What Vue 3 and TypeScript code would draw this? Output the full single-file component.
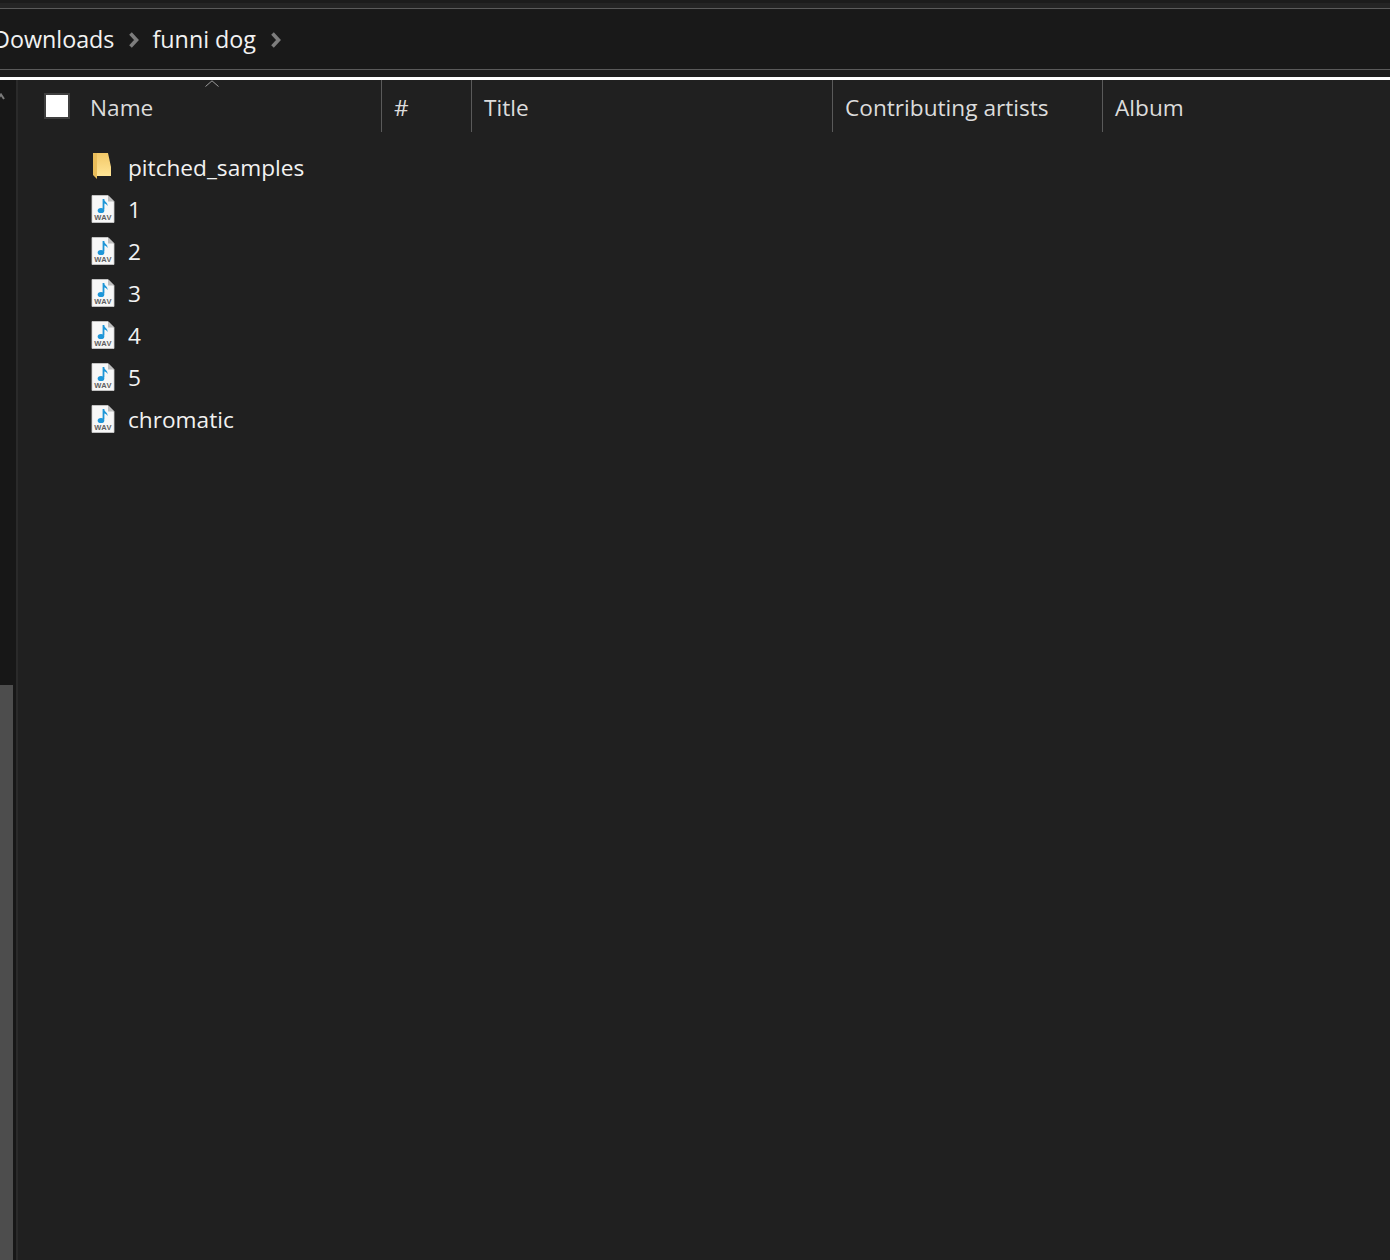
<script setup lang="ts">
interface Col { label: string; width: number }
const cols: Col[] = [
  { label: '#', width: 90 },
  { label: 'Title', width: 361 },
  { label: 'Contributing artists', width: 270 },
  { label: 'Album', width: 288 },
]
const files: string[] = ['1', '2', '3', '4', '5', 'chromatic']
</script>

<template>
  <div class="window">
    <div class="topstrip"></div>
    <div class="crumbs">
      <span class="crumb first">Downloads</span>
      <svg class="chev" viewBox="0 0 12 16" width="12" height="16"><path d="M2.5 1.5 L8.5 8 L2.5 14.5" fill="none" stroke="#7d7d7d" stroke-width="3.6" /></svg>
      <span class="crumb">funni dog</span>
      <svg class="chev" viewBox="0 0 12 16" width="12" height="16"><path d="M2.5 1.5 L8.5 8 L2.5 14.5" fill="none" stroke="#7d7d7d" stroke-width="3.6" /></svg>
    </div>
    <div class="gap"></div>
    <div class="whiteline"></div>
    <div class="body">
      <aside class="side">
        <svg class="up" viewBox="0 0 6 8" width="6" height="8"><path d="M-2 6 L1 1.5 L4 6" fill="none" stroke="#7a7a7a" stroke-width="2" /></svg>
        <div class="thumb"></div>
      </aside>
      <main class="main">
        <div class="head">
          <div class="namecol">
            <span class="check"></span>
            <span class="hlabel">Name</span>
            <svg class="sort" viewBox="0 0 14 7" width="14" height="7"><path d="M0.5 6.5 L7 0.8 L13.5 6.5" fill="none" stroke="#9c9c9c" stroke-width="1" /></svg>
          </div>
          <div v-for="c in cols" :key="c.label" class="col" :style="{ width: c.width + 'px' }">
            <span class="hlabel">{{ c.label }}</span>
          </div>
        </div>
        <div class="list">
          <div class="row">
            <svg class="icon" viewBox="0 0 24 28" width="24" height="28">
              <defs>
                <linearGradient id="fold" x1="0" y1="0" x2="0" y2="1">
                  <stop offset="0" stop-color="#f3c867" />
                  <stop offset="1" stop-color="#ffe596" />
                </linearGradient>
              </defs>
              <path d="M6 0 H17 L20 14 V23 H6 Z" fill="url(#fold)" />
              <path d="M2 0 H6 V26 L2 22 Z" fill="#e9bd5a" />
            </svg>
            <span class="fname">pitched_samples</span>
          </div>
          <div v-for="f in files" :key="f" class="row">
            <svg class="icon" viewBox="0 0 24 28" width="24" height="28">
              <path d="M1 0.5 H17 L23 6.5 V27.5 H1 Z" fill="#f7f7f7" stroke="#cfcfcf" stroke-width="0.8" />
              <path d="M17 0.5 V6.5 H23 Z" fill="#bdbdbd" />
              <path d="M12.5 4 V14.5" stroke="#1e96d8" stroke-width="1.8" fill="none" />
              <ellipse cx="10" cy="15.5" rx="3.3" ry="2.6" fill="#1e96d8" />
              <path d="M12.5 4 C13.5 7 17 7.5 16.5 11 C15.5 9 14 8.5 12.5 8.5 Z" fill="#1e96d8" />
              <text x="12" y="25" class="wav" text-anchor="middle">WAV</text>
            </svg>
            <span class="fname">{{ f }}</span>
          </div>
        </div>
      </main>
    </div>
  </div>
</template>

<style>
html, body { margin: 0; background: #202020; }
</style>

<style scoped>
.window {
  width: 1390px;
  height: 1260px;
  display: flex;
  flex-direction: column;
  overflow: hidden;
  background: #202020;
  color: #f2f2f2;
  font-family: "Open Sans", "Noto Sans", sans-serif;
  font-size: 22.65px;
}
.topstrip {
  height: 8px;
  background: linear-gradient(#1c1c1c 0 3px, #242424 3px);
  border-bottom: 1px solid #5a5a5a;
  flex: none;
}
.crumbs {
  height: 60px;
  flex: none;
  background: #191919;
  border-bottom: 1px solid #5a5a5a;
  display: flex;
  align-items: center;
  overflow: hidden;
}
.crumb { white-space: nowrap; font-size: 23.3px; }
.first { margin-left: -7px; }
.chev { margin: 2px 12px 0 14px; flex: none; }
.gap { height: 7px; flex: none; background: #1c1c1c; }
.whiteline { height: 3px; flex: none; background: #ffffff; }
.body { flex: 1; display: flex; min-height: 0; }
.side {
  width: 18px;
  box-sizing: border-box;
  flex: none;
  background: #171717;
  display: flex;
  flex-direction: column;
  justify-content: flex-end;
  position: relative;
  border-right: 2px solid #2a2a2a;
}
.up { position: absolute; left: 0; top: 13px; }
.thumb { height: 575px; width: 13px; background: #4d4d4d; }
.main { flex: 1; min-width: 0; background: #202020; }
.head { display: flex; height: 52px; }
.namecol {
  width: 363px;
  flex: none;
  display: flex;
  align-items: center;
  position: relative;
  padding-left: 26px;
  box-sizing: border-box;
}
.check {
  width: 22px;
  height: 22px;
  background: #fff;
  border: 2px solid #3f3f3f;
  margin-right: 20px;
  flex: none;
}
.sort { position: absolute; left: 187px; top: 0; }
.col {
  flex: none;
  box-sizing: border-box;
  border-left: 1px solid #5a5a5a;
  padding-left: 12px;
  display: flex;
  align-items: center;
  white-space: nowrap;
}
.hlabel { color: #dcdcdc; padding-top: 2px; }
.list { padding-top: 14px; padding-left: 73px; }
.row { height: 42px; display: flex; align-items: center; }
.icon { flex: none; margin-right: 13px; margin-bottom: 1px; }
.fname { white-space: nowrap; }
.wav { font-family: "Liberation Sans", sans-serif; font-size: 7.5px; font-weight: 700; letter-spacing: 0.4px; fill: #5f5f5f; }
</style>
